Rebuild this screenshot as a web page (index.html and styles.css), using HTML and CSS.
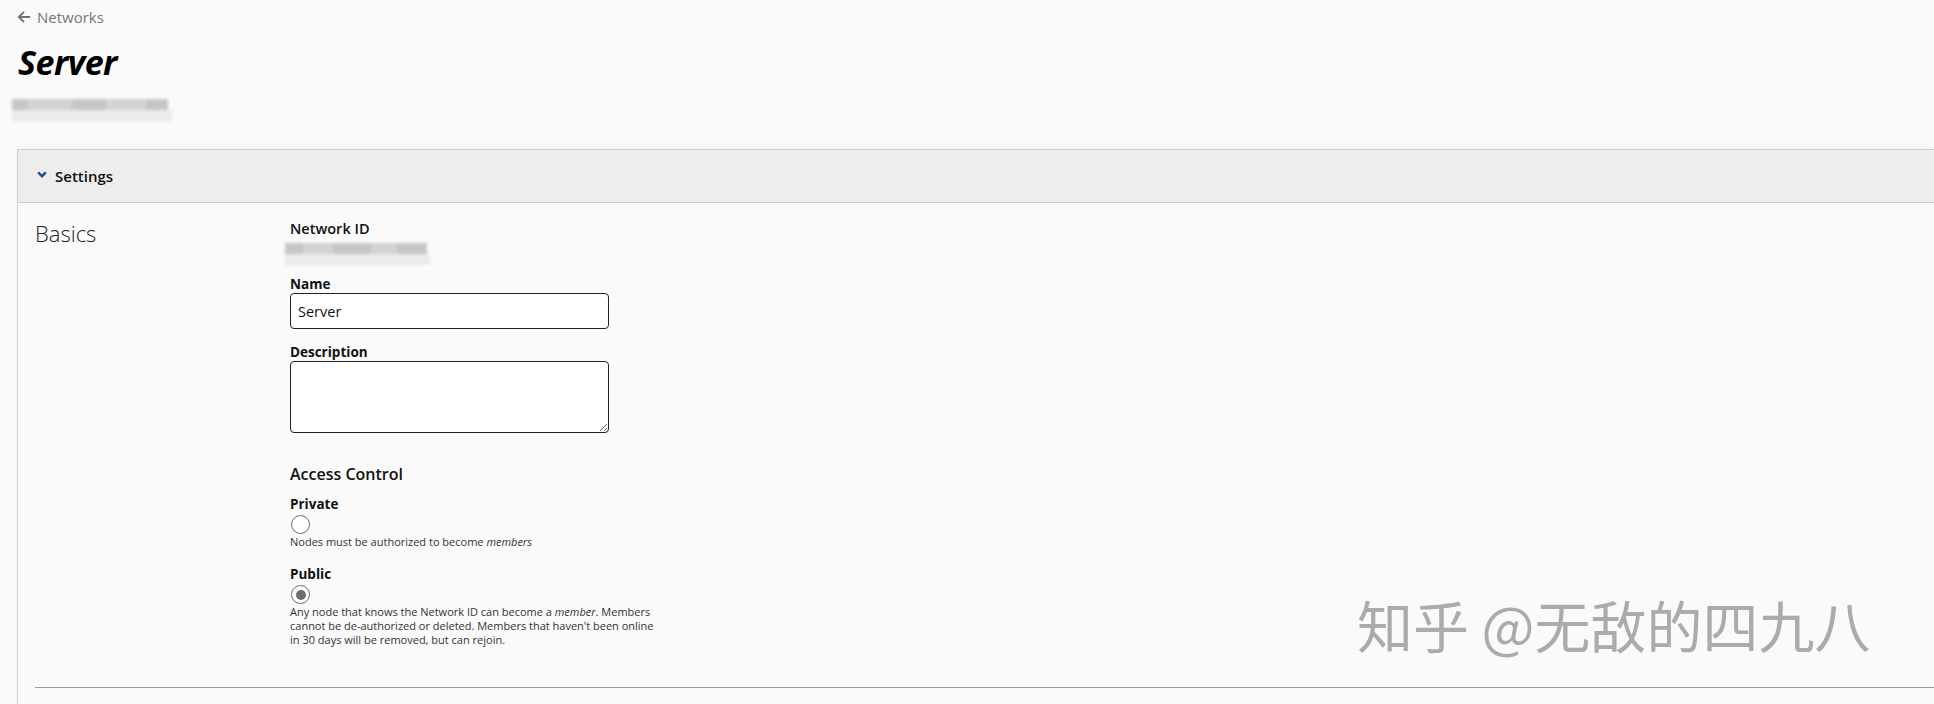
FILE: index.html
```html
<!DOCTYPE html>
<html lang="en">
<head>
<meta charset="utf-8">
<title>Server</title>
<link rel="stylesheet" href="styles.css">
</head>
<body>
<div class="page">
  <a class="back" href="#">
    <svg class="back-icon" viewBox="0 0 14 14" width="14" height="14"><path d="M13 7H2.5M7 1.8L1.8 7L7 12.2" fill="none" stroke="#6f6f6f" stroke-width="1.8"/></svg>
    <span>Networks</span>
  </a>
  <h1 class="title">Server</h1>
  <div class="blurred blurred-title">
    <div class="blur-row dark"><span style="width:16px"></span><span style="width:44px"></span><span style="width:34px"></span><span style="width:40px"></span><span style="width:22px"></span></div>
    <div class="blur-row light"><span style="width:160px"></span></div>
  </div>

  <section class="panel">
    <header class="panel-header">
      <svg class="chevron" viewBox="0 0 10 7" width="10" height="7"><path d="M1.2 1.4L5 5.2L8.8 1.4" fill="none" stroke="#1f4e8c" stroke-width="2.4"/></svg>
      <span>Settings</span>
    </header>
    <div class="panel-body">
      <div class="group">
        <h2 class="group-title">Basics</h2>
        <div class="fields">
          <div class="field-label big">Network ID</div>
          <div class="blurred blurred-id">
            <div class="blur-row dark"><span style="width:18px"></span><span style="width:30px"></span><span style="width:38px"></span><span style="width:26px"></span><span style="width:30px"></span></div>
            <div class="blur-row light"><span style="width:145px"></span></div>
          </div>
          <label class="field-label">Name</label>
          <input class="text-input" type="text" value="Server">
          <label class="field-label desc-label">Description</label>
          <textarea class="text-area"></textarea>

          <h3 class="sub-title">Access Control</h3>
          <div class="option">
            <div class="field-label">Private</div>
            <span class="radio"></span>
            <p class="hint">Nodes must be authorized to become <em>members</em></p>
          </div>
          <div class="option">
            <div class="field-label">Public</div>
            <span class="radio checked"></span>
            <p class="hint">Any node that knows the Network ID can become a <em>member</em>. Members cannot be de-authorized or deleted. Members that haven't been online in 30 days will be removed, but can rejoin.</p>
          </div>
        </div>
      </div>
      <hr class="divider">
    </div>
  </section>
  <div class="watermark">知乎 @无敌的四九八</div>
</div>
</body>
</html>
```

FILE: styles.css
```css
html, body {
  margin: 0;
  padding: 0;
  background: #fafafa;
  overflow: hidden;
}
body {
  font-family: "Open Sans", "Noto Sans", "Liberation Sans", "Noto Sans CJK SC", sans-serif;
  color: #111;
}
.page {
  position: relative;
  width: 1934px;
  height: 704px;
  overflow: hidden;
}
.back {
  display: flex;
  align-items: center;
  gap: 6px;
  padding: 6px 0 0 17px;
  height: 22px;
  color: #777;
  text-decoration: none;
  font-size: 15px;
}
.back-icon { flex: none; }
.title {
  margin: 12px 0 0 18px;
  font-size: 34px;
  line-height: 44px;
  font-weight: 700;
  font-style: italic;
  letter-spacing: -0.5px;
  color: #000;
}
.blurred {
  display: flex;
  flex-direction: column;
  filter: blur(1.6px);
}
.blur-row {
  display: flex;
  height: 11px;
}
.blur-row span { display: block; height: 100%; }
.blur-row.dark span { background: #c6c6c6; }
.blur-row.dark span:nth-child(2n) { background: #d3d3d3; }
.blur-row.light span { background: #ebebeb; }
.blurred-title {
  margin: 15px 0 0 12px;
  width: 160px;
}
.panel {
  margin: 28px 0 0 17px;
  border-top: 1px solid #cfcfcf;
  border-left: 1px solid #cfcfcf;
  box-shadow: 0 -3px 6px rgba(0,0,0,0.03);
}
.panel-header {
  display: flex;
  align-items: center;
  gap: 8px;
  height: 52px;
  padding-left: 19px;
  background: #ededed;
  border-bottom: 1px solid #cfcfcf;
  font-size: 15px;
  font-weight: 600;
  color: #111;
}
.chevron { flex: none; margin-top: -4px; }
.panel-body {
  padding: 14px 0 40px 17px;
}
.group {
  display: grid;
  grid-template-columns: 255px 1fr;
}
.group-title {
  margin: 0;
  font-size: 22px;
  font-weight: 300;
  line-height: 32px;
  color: #222;
}
.fields {
  display: flex;
  flex-direction: column;
  align-items: flex-start;
  padding-top: 2px;
}
.field-label {
  display: block;
  font-size: 13.5px;
  font-weight: 700;
  line-height: 18px;
  color: #111;
}
.field-label.big {
  font-size: 14.5px;
  font-weight: 600;
  line-height: 20px;
}
.blurred-id {
  margin: 4px 0 10px -5px;
  width: 150px;
}
.text-input {
  box-sizing: border-box;
  width: 319px;
  height: 36px;
  margin: 0;
  padding: 0 7px;
  border: 1px solid #222;
  border-radius: 4px;
  background: #fff;
  font-family: inherit;
  font-size: 14.5px;
  color: #111;
}
.desc-label { margin-top: 14px; }
.text-area {
  box-sizing: border-box;
  display: block;
  width: 319px;
  height: 72px;
  margin: 0;
  border: 1px solid #222;
  border-radius: 4px;
  background: #fff;
  resize: both;
}
.sub-title {
  margin: 30px 0 0;
  font-size: 16px;
  font-weight: 600;
  line-height: 22px;
  color: #111;
}
.option {
  display: flex;
  flex-direction: column;
  align-items: flex-start;
  margin-top: 10px;
}
.option + .option { margin-top: 16px; }
.radio {
  box-sizing: border-box;
  display: flex;
  align-items: center;
  justify-content: center;
  width: 19px;
  height: 19px;
  margin: 2px 0 1px 1px;
  border: 1.5px solid #6a6a6a;
  border-radius: 50%;
  background: #fff;
}
.radio.checked::after {
  content: "";
  width: 10px;
  height: 10px;
  border-radius: 50%;
  background: #6d6d6d;
}
.hint {
  margin: 0;
  width: 372px;
  font-size: 11px;
  line-height: 14px;
  color: #333;
}
.divider {
  margin: 40px 0 0;
  border: 0;
  border-top: 1px solid #9a9a9a;
}
.watermark {
  position: absolute;
  left: 1357px;
  top: 594px;
  font-family: "Noto Sans CJK SC", sans-serif;
  font-size: 56px;
  line-height: 60px;
  color: #ababab;
  text-shadow: 2px 2px 0 #fafafa;
  white-space: nowrap;
}
```
